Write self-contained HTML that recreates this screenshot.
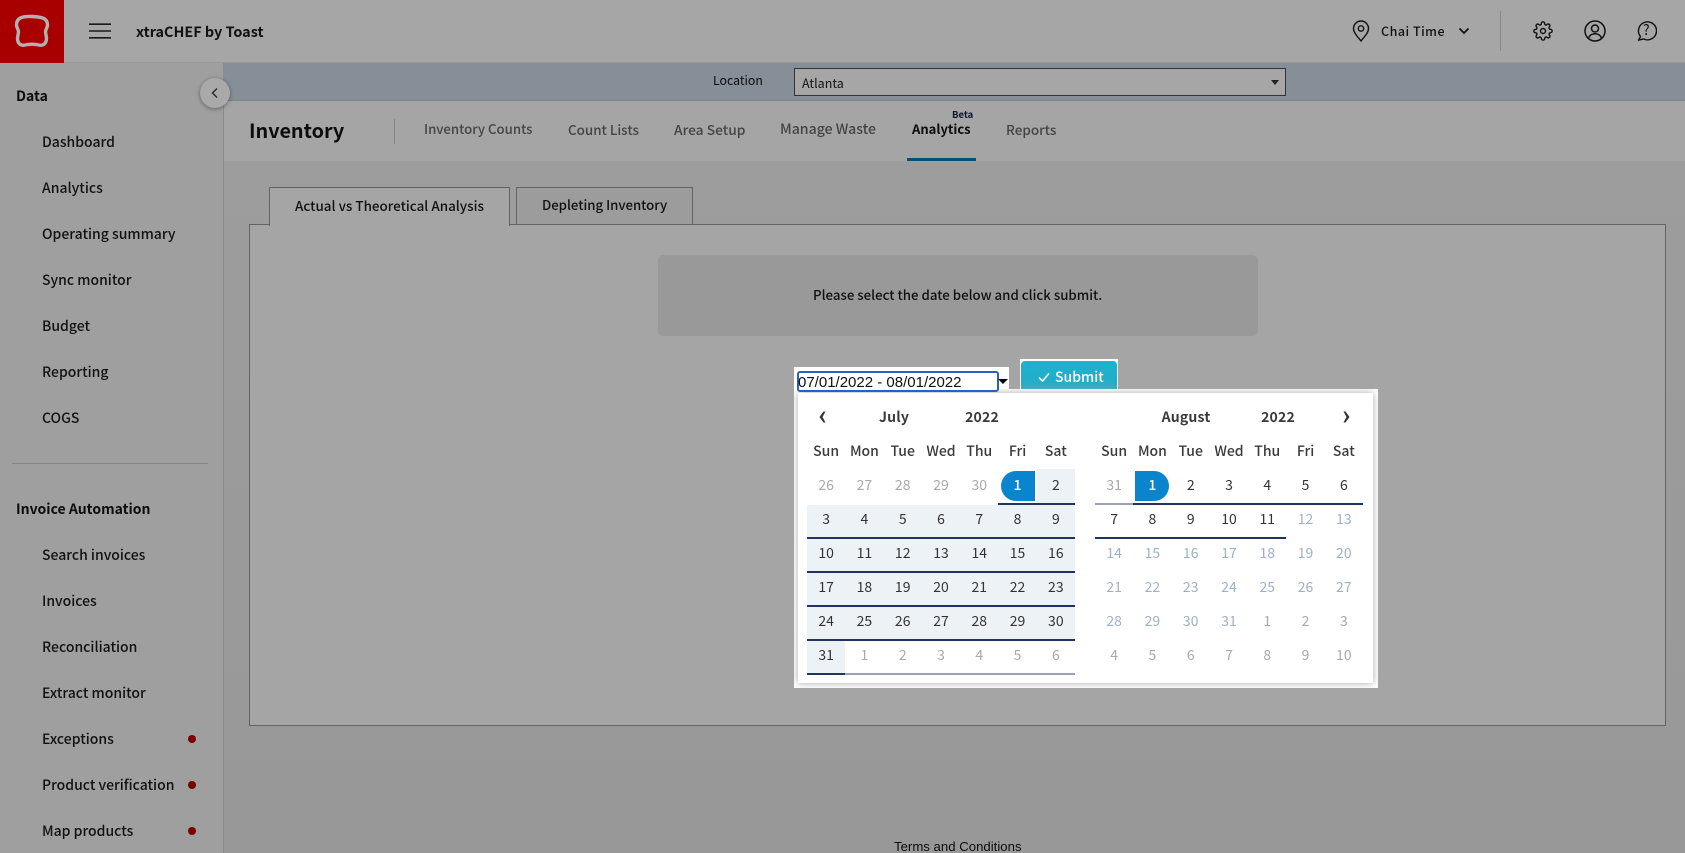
<!DOCTYPE html>
<html lang="en"><head><meta charset="utf-8"><title>xtraCHEF by Toast</title>
<style>
*{box-sizing:border-box}
html,body{margin:0;padding:0;width:1685px;height:853px;overflow:hidden;background:#9b9b9b}
body{position:relative;font-family:"Noto Sans CJK JP","Liberation Sans",sans-serif;color:#0c0c0c}
.b{position:absolute}
.t{position:absolute;white-space:nowrap}
.s{left:42px;font-size:14px;line-height:22px;color:#111;font-weight:500}
.h{left:16px;font-size:14px;line-height:22px;font-weight:700;color:#0c0c0c}
.n{font-size:13.2px;line-height:20px;top:119px;font-weight:500;color:#444}
.dot{position:absolute;left:188px;width:8px;height:8px;border-radius:50%;background:#7b0000}
.cal{position:absolute;left:0;top:0;width:1685px;height:853px;font-family:"Liberation Sans","Noto Sans CJK JP",sans-serif}
.c{font-family:"Noto Sans CJK JP","Liberation Sans",sans-serif}
.wk,.row{position:absolute;display:flex;width:268px;color:#333;font-size:14px;text-align:center}
.wk span,.row span{flex:0 0 38.29px;display:block}
.wk{font-weight:500;top:441px;line-height:20px;color:#3a3a3a}
.row{height:34px;line-height:28px}
.g{color:#a9a9a9}.u{color:#9db1c8}
.bg{background:#ecf2f6}
.ln{position:absolute;height:2px;background:#1f3460}
.lg{position:absolute;height:2px;background:#9ca1b6}
.m{position:absolute;font-size:14px;line-height:20px;font-weight:700;color:#3a3a3a;transform:translateX(-50%);white-space:nowrap;letter-spacing:.2px}
</style></head><body>

<!-- top bar -->
<div class="b" style="left:0;top:0;width:1685px;height:63px;background:#a6a6a6;border-bottom:1px solid #9a9a9a"></div>
<div class="b" style="left:0;top:0;width:64px;height:63px;background:#a80000"></div>
<svg class="b" style="left:0;top:0" width="64" height="63" viewBox="0 0 64 63"><path d="M32 16.500C22 16 16.500 18 16.500 25C16.500 28 18.500 29 18.500 32L17.500 38C17.500 44 21 46 25 45C29 44 35 44 39 45C43 46 46.500 44 46.500 38L45.500 32C45.500 29 47.500 28 47.500 25C47.500 18 42 17 32 16.500Z" fill="none" stroke="#b4b0b0" stroke-width="3.400"/></svg>
<svg class="b" style="left:89px;top:23px" width="22" height="16"><path d="M0 1.200H22M0 8H22M0 14.800H22" stroke="#1a1a1a" stroke-width="1.600"/></svg>
<div class="t" style="left:136px;top:21px;font-size:14.400px;line-height:22px;font-weight:700;color:#111">xtraCHEF by Toast</div>
<svg class="b" style="left:1351px;top:20px" width="20" height="22" viewBox="0 0 20 22"><path d="M10 21C6 16 2.500 12.500 2.500 8.500A7.500 7.500 0 0 1 17.500 8.500C17.500 12.500 14 16 10 21Z" fill="none" stroke="#111" stroke-width="1.400"/><circle cx="10" cy="8.500" r="2.700" fill="none" stroke="#111" stroke-width="1.400"/></svg>
<div class="t" style="left:1381px;top:20px;font-size:12.500px;line-height:21px;font-weight:500;letter-spacing:.5px;color:#111">Chai Time</div>
<svg class="b" style="left:1458px;top:27px" width="12" height="8"><path d="M1.500 1.500L6 6L10.500 1.500" fill="none" stroke="#111" stroke-width="1.700"/></svg>
<div class="b" style="left:1500px;top:11px;width:1px;height:40px;background:#888"></div>
<svg class="b" style="left:1533px;top:21px" width="20" height="20" viewBox="0 0 24 24" fill="none" stroke="#111" stroke-width="1.700"><circle cx="12" cy="12" r="3"/><path d="M19.400 15a1.650 1.650 0 0 0 .33 1.820l.06.06a2 2 0 0 1 0 2.830 2 2 0 0 1-2.830 0l-.06-.06a1.650 1.650 0 0 0-1.820-.33 1.650 1.650 0 0 0-1 1.510V21a2 2 0 0 1-2 2 2 2 0 0 1-2-2v-.09A1.650 1.650 0 0 0 9 19.400a1.650 1.650 0 0 0-1.820.33l-.06.06a2 2 0 0 1-2.830 0 2 2 0 0 1 0-2.830l.06-.06a1.650 1.650 0 0 0 .33-1.820 1.650 1.650 0 0 0-1.510-1H3a2 2 0 0 1-2-2 2 2 0 0 1 2-2h.09A1.650 1.650 0 0 0 4.600 9a1.650 1.650 0 0 0-.33-1.820l-.06-.06a2 2 0 0 1 0-2.830 2 2 0 0 1 2.830 0l.06.06a1.650 1.650 0 0 0 1.820.33H9a1.650 1.650 0 0 0 1-1.510V3a2 2 0 0 1 2-2 2 2 0 0 1 2 2v.09a1.650 1.650 0 0 0 1 1.510 1.650 1.650 0 0 0 1.820-.33l.06-.06a2 2 0 0 1 2.830 0 2 2 0 0 1 0 2.830l-.06.06a1.650 1.650 0 0 0-.33 1.820V9a1.650 1.650 0 0 0 1.510 1H21a2 2 0 0 1 2 2 2 2 0 0 1-2 2h-.09a1.650 1.650 0 0 0-1.510 1z"/></svg>
<svg class="b" style="left:1584px;top:20px" width="22" height="22" viewBox="0 0 22 22" fill="none" stroke="#111" stroke-width="1.500"><circle cx="11" cy="11" r="10"/><circle cx="11" cy="8.500" r="3.500"/><path d="M4.500 18.500C5.500 14.800 8 13.800 11 13.800C14 13.800 16.500 14.800 17.500 18.500"/></svg>
<svg class="b" style="left:1637px;top:21px" width="20" height="20" viewBox="0 0 20 20" fill="none" stroke="#111" stroke-width="1.400"><path d="M1.500 19.200L3.500 15.500A9 9 0 1 1 6.500 17.900Z" stroke-linejoin="round"/></svg>
<div class="t" style="left:1643px;top:22px;font-size:14px;line-height:16px;color:#111">?</div>

<!-- sidebar -->
<div class="b" style="left:0;top:63px;width:224px;height:790px;background:#9f9f9f;border-right:1px solid #8b8b8b"></div>
<div class="t h" style="top:85px">Data</div>
<div class="t s" style="top:131px">Dashboard</div>
<div class="t s" style="top:177px">Analytics</div>
<div class="t s" style="top:223px">Operating summary</div>
<div class="t s" style="top:269px">Sync monitor</div>
<div class="t s" style="top:315px">Budget</div>
<div class="t s" style="top:361px">Reporting</div>
<div class="t s" style="top:407px">COGS</div>
<div class="b" style="left:12px;top:463px;width:196px;height:1px;background:#858585"></div>
<div class="t h" style="top:498px">Invoice Automation</div>
<div class="t s" style="top:544px">Search invoices</div>
<div class="t s" style="top:590px">Invoices</div>
<div class="t s" style="top:636px">Reconciliation</div>
<div class="t s" style="top:682px">Extract monitor</div>
<div class="t s" style="top:728px">Exceptions</div>
<div class="t s" style="top:774px">Product verification</div>
<div class="t s" style="top:820px">Map products</div>
<div class="dot" style="top:735px"></div>
<div class="dot" style="top:781px"></div>
<div class="dot" style="top:827px"></div>

<!-- location band -->
<div class="b" style="left:224px;top:63px;width:1461px;height:38px;background:#868e97;border-bottom:1px solid #7e8389"></div>
<div class="t" style="left:713px;top:71px;font-size:12.300px;line-height:19px;color:#0c0c0c">Location</div>
<div class="b" style="left:794px;top:68px;width:492px;height:28px;background:#a6a6a6;border:1px solid #333"></div>
<div class="t" style="left:802px;top:73px;font-size:12.500px;line-height:19px;color:#111">Atlanta</div>
<div class="b" style="left:1271px;top:80px;width:0;height:0;border-left:4px solid transparent;border-right:4px solid transparent;border-top:5px solid #222"></div>

<!-- sub nav -->
<div class="b" style="left:224px;top:101px;width:1461px;height:60px;background:#a5a5a5"></div>
<div class="t" style="left:249px;top:113px;font-size:19.800px;line-height:34px;font-weight:700;color:#0c0c0c">Inventory</div>
<div class="b" style="left:394px;top:119px;width:1px;height:25px;background:#858585"></div>
<div class="t n" style="left:424px">Inventory Counts</div>
<div class="t n" style="left:568px;font-size:13.400px">Count Lists</div>
<div class="t n" style="left:674px;font-size:13.800px">Area Setup</div>
<div class="t n" style="left:780px;font-size:14.100px">Manage Waste</div>
<div class="t n" style="left:912px;color:#0c0c0c;font-weight:700;font-size:13px">Analytics</div>
<div class="t n" style="left:1006px;font-size:13.500px">Reports</div>
<div class="t" style="left:952px;top:108px;font-size:9.500px;line-height:13px;font-weight:700;color:#0c1430">Beta</div>
<div class="b" style="left:907px;top:158px;width:69px;height:3px;background:#07506f"></div>

<!-- content -->
<div class="b" style="left:224px;top:161px;width:1461px;height:692px;background:linear-gradient(#9d9d9d,#989898)"></div>
<div class="b" style="left:249px;top:224px;width:1417px;height:502px;background:#a5a5a5;border:1px solid #636363"></div>
<div class="b" style="left:269px;top:187px;width:241px;height:39px;background:#a5a5a5;border:1px solid #636363;border-bottom:none"></div>
<div class="b" style="left:516px;top:187px;width:177px;height:38px;background:#9c9c9c;border:1px solid #636363"></div>
<div class="t" style="left:295px;top:194.500px;font-size:13.450px;line-height:20px;font-weight:500;color:#111">Actual vs Theoretical Analysis</div>
<div class="t" style="left:542px;top:195px;font-size:13.200px;line-height:20px;font-weight:500;color:#111">Depleting Inventory</div>
<div class="b" style="left:658px;top:255px;width:600px;height:81px;background:#999;border-radius:5px"></div>
<div class="t" style="left:813px;top:285px;font-size:13.250px;line-height:20px;font-weight:500;color:#111">Please select the date below and click submit.</div>
<div class="t" style="left:894px;top:839px;font-family:'Liberation Sans',sans-serif;font-size:13.200px;line-height:16px;color:#0c0c0c">Terms and Conditions</div>

<!-- collapse -->
<div class="b" style="left:200px;top:78px;width:30px;height:30px;border-radius:50%;background:#a9a9a9;box-shadow:0 1px 4px rgba(0,0,0,.4)"></div>
<svg class="b" style="left:210px;top:87px" width="10" height="12"><path d="M7 1.500L2.500 6L7 10.500" fill="none" stroke="#222" stroke-width="1.300"/></svg>

<!-- highlighted button -->
<div class="b" style="left:1020px;top:359px;width:98px;height:34px;background:#fff"></div>
<div class="b" style="left:1021px;top:361px;width:96px;height:32px;border-radius:4px 4px 0 0;background:linear-gradient(#1cb3cd 0,#22adc8 65%,#5fa5b6 100%)"></div>
<svg class="b" style="left:1038px;top:372px" width="12" height="11"><path d="M1 5.500L4.500 9L11 1.500" fill="none" stroke="#fff" stroke-width="1.500"/></svg>
<div class="t" style="left:1055px;top:367px;font-size:14px;line-height:20px;font-weight:500;color:#fff">Submit</div>

<!-- calendar popup -->
<div class="b" style="left:794px;top:367px;width:215px;height:30px;background:#fff"></div>
<div class="b" style="left:794px;top:389px;width:584px;height:299px;background:#fff;overflow:hidden"><div class="b" style="left:4px;top:4px;width:575px;height:290px;background:#fff;box-shadow:0 0 7px rgba(0,0,0,.35)"></div></div>
<div class="b" style="left:797px;top:371px;width:202px;height:21px;background:#fff;border:2px solid #2a5fc4;border-radius:3px"></div>
<div class="t" style="left:798px;top:371.500px;font-family:'Liberation Sans',sans-serif;font-size:15px;line-height:21px;color:#111">07/01/2022 - 08/01/2022</div>
<div class="b" style="left:998px;top:379px;width:0;height:0;border-left:5px solid transparent;border-right:5px solid transparent;border-top:5px solid #000"></div>
<div class="cal">
<svg class="b" style="left:817px;top:411px" width="10" height="12"><path d="M6.500 .5L2.500 6L6.500 11.500L8.500 11.500L5.500 6L8.500 .5Z" fill="#333"/></svg>
<svg class="b" style="left:1342px;top:411px" width="10" height="12"><path d="M3.500 .5L7.500 6L3.500 11.500L1.500 11.500L4.500 6L1.500 .5Z" fill="#333"/></svg>
<div class="m c" style="left:894px;top:407px">July</div>
<div class="m c" style="left:982px;top:407px">2022</div>
<div class="m c" style="left:1186px;top:407px">August</div>
<div class="m c" style="left:1278px;top:407px">2022</div>

<div class="wk c" style="left:807px"><span>Sun</span><span>Mon</span><span>Tue</span><span>Wed</span><span>Thu</span><span>Fri</span><span>Sat</span></div>
<div class="wk c" style="left:1095px"><span>Sun</span><span>Mon</span><span>Tue</span><span>Wed</span><span>Thu</span><span>Fri</span><span>Sat</span></div>

<!-- range backgrounds -->
<div class="b bg" style="left:1037px;top:469px;width:38px;height:34px"></div>
<div class="b bg" style="left:807px;top:505px;width:268px;height:32px"></div>
<div class="b bg" style="left:807px;top:539px;width:268px;height:32px"></div>
<div class="b bg" style="left:807px;top:573px;width:268px;height:32px"></div>
<div class="b bg" style="left:807px;top:607px;width:268px;height:32px"></div>
<div class="b bg" style="left:807px;top:641px;width:38px;height:32px"></div>
<div class="b" style="left:1001px;top:471px;width:34px;height:30px;background:#0a84cc;border-radius:17px 0 0 17px"></div>
<div class="b" style="left:1135px;top:471px;width:34px;height:30px;background:#0a84cc;border-radius:0 17px 17px 0"></div>

<!-- lines -->
<div class="ln" style="left:998px;top:503px;width:77px"></div>
<div class="ln" style="left:807px;top:537px;width:268px"></div>
<div class="ln" style="left:807px;top:571px;width:268px"></div>
<div class="ln" style="left:807px;top:605px;width:268px"></div>
<div class="ln" style="left:807px;top:639px;width:268px"></div>
<div class="ln" style="left:807px;top:673px;width:38px"></div>
<div class="lg" style="left:845px;top:673px;width:230px"></div>
<div class="lg" style="left:1095px;top:503px;width:38px"></div>
<div class="ln" style="left:1133px;top:503px;width:230px"></div>
<div class="ln" style="left:1095px;top:537px;width:191px"></div>

<!-- July -->
<div class="row c" style="left:807px;top:471px"><span class="g">26</span><span class="g">27</span><span class="g">28</span><span class="g">29</span><span class="g">30</span><span style="color:#fff;font-weight:500">1</span><span>2</span></div>
<div class="row c" style="left:807px;top:505px"><span>3</span><span>4</span><span>5</span><span>6</span><span>7</span><span>8</span><span>9</span></div>
<div class="row c" style="left:807px;top:539px"><span>10</span><span>11</span><span>12</span><span>13</span><span>14</span><span>15</span><span>16</span></div>
<div class="row c" style="left:807px;top:573px"><span>17</span><span>18</span><span>19</span><span>20</span><span>21</span><span>22</span><span>23</span></div>
<div class="row c" style="left:807px;top:607px"><span>24</span><span>25</span><span>26</span><span>27</span><span>28</span><span>29</span><span>30</span></div>
<div class="row c" style="left:807px;top:641px"><span>31</span><span class="g">1</span><span class="g">2</span><span class="g">3</span><span class="g">4</span><span class="g">5</span><span class="g">6</span></div>

<!-- August -->
<div class="row c" style="left:1095px;top:471px"><span class="g">31</span><span style="color:#fff;font-weight:500">1</span><span>2</span><span>3</span><span>4</span><span>5</span><span>6</span></div>
<div class="row c" style="left:1095px;top:505px"><span>7</span><span>8</span><span>9</span><span>10</span><span>11</span><span class="u">12</span><span class="u">13</span></div>
<div class="row c" style="left:1095px;top:539px"><span class="u">14</span><span class="u">15</span><span class="u">16</span><span class="u">17</span><span class="u">18</span><span class="u">19</span><span class="u">20</span></div>
<div class="row c" style="left:1095px;top:573px"><span class="u">21</span><span class="u">22</span><span class="u">23</span><span class="u">24</span><span class="u">25</span><span class="u">26</span><span class="u">27</span></div>
<div class="row c" style="left:1095px;top:607px"><span class="u">28</span><span class="u">29</span><span class="u">30</span><span class="u">31</span><span class="g">1</span><span class="g">2</span><span class="g">3</span></div>
<div class="row c" style="left:1095px;top:641px"><span class="g">4</span><span class="g">5</span><span class="g">6</span><span class="g">7</span><span class="g">8</span><span class="g">9</span><span class="g">10</span></div>
</div>
</body></html>
